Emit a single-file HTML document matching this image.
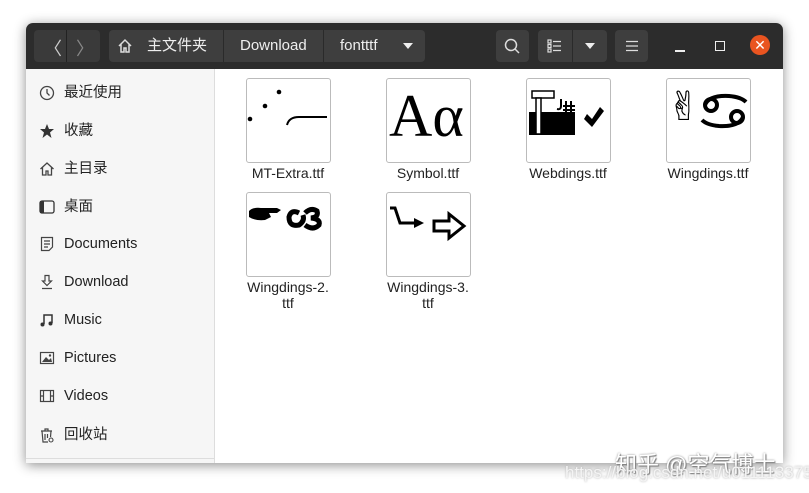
<!DOCTYPE html><html><head><meta charset="utf-8"><style>
body{margin:0;width:809px;height:493px;background:#fff;position:relative;overflow:hidden;font-family:"Liberation Sans","Noto Sans CJK SC",sans-serif}
.win{position:absolute;left:26px;top:23px;width:757px;height:440px;background:#fff;border-radius:7px 7px 0 0;box-shadow:0 2px 12px rgba(0,0,0,.45);overflow:hidden}
.hdr{position:absolute;left:0;top:0;width:757px;height:46px;background:#2c2c2c}
.b{position:absolute;top:7px;height:32px;background:#3e3e3e;border-radius:4px;color:#eee;font-size:15px;line-height:32px;text-align:center}
.side{position:absolute;left:0;top:46px;width:188px;height:394px;background:#f6f6f6;border-right:1px solid #ddd}
.it{position:absolute;left:38px;font-size:14.5px;color:#222;line-height:18px;height:18px}
.ic{position:absolute;left:13px;width:16px;height:16px}
.box{position:absolute;width:83px;height:83px;border:1px solid #bbb;border-radius:3px;background:#fff;overflow:hidden}
.lb{position:absolute;width:120px;text-align:center;font-size:14px;color:#222;line-height:16px}
</style></head><body>
<div class="win">
<div class="hdr">
<div class="b" style="left:8px;width:66px;background:#3a3a3a"></div>
<div style="position:absolute;left:40px;top:7px;width:1px;height:32px;background:#222"></div>
<div style="position:absolute;left:18px;top:12px;color:#ccc;font-size:18px">〈</div>
<div style="position:absolute;left:50px;top:12px;color:#888;font-size:18px">〉</div>
<div class="b" style="left:83px;width:316px"></div>
<div style="position:absolute;left:197px;top:7px;width:1px;height:32px;background:#2a2a2a"></div>
<div style="position:absolute;left:297px;top:7px;width:1px;height:32px;background:#2a2a2a"></div>
<svg style="position:absolute;left:91px;top:15px" width="16" height="16" viewBox="0 0 16 16"><path d="M2 8L8 2 14 8M4 6.5V14H7V10H9V14H12V6.5" fill="none" stroke="#ddd" stroke-width="1.5"/></svg>
<div style="position:absolute;left:121px;top:7px;line-height:32px;color:#eee;font-size:15px">主文件夹</div>
<div style="position:absolute;left:214px;top:7px;line-height:32px;color:#eee;font-size:15px">Download</div>
<div style="position:absolute;left:314px;top:7px;line-height:32px;color:#eee;font-size:15px">fontttf</div>
<div style="position:absolute;left:377px;top:20px;border:5px solid transparent;border-top:6px solid #eee"></div>
<div class="b" style="left:470px;width:33px"></div>
<svg style="position:absolute;left:478px;top:15px" width="17" height="17"><circle cx="7" cy="7" r="5.5" fill="none" stroke="#ddd" stroke-width="1.5"/><path d="M11 11L15 15" stroke="#ddd" stroke-width="1.5"/></svg>
<div class="b" style="left:512px;width:69px"></div>
<div style="position:absolute;left:546px;top:7px;width:1px;height:32px;background:#2a2a2a"></div>
<svg style="position:absolute;left:521px;top:16px" width="16" height="14"><g fill="none" stroke="#ddd" stroke-width="1.2"><rect x="1" y="1" width="3" height="3"/><rect x="1" y="5.5" width="3" height="3"/><rect x="1" y="10" width="3" height="3"/><path d="M6 2.5H14M6 7H14M6 11.5H14"/></g></svg>
<div style="position:absolute;left:559px;top:20px;border:5px solid transparent;border-top:6px solid #eee"></div>
<div class="b" style="left:589px;width:33px"></div>
<svg style="position:absolute;left:599px;top:16px" width="14" height="14"><path d="M1 2.5H13M1 7H13M1 11.5H13" stroke="#ddd" stroke-width="1.2"/></svg>
<div style="position:absolute;left:649px;top:27px;width:10px;height:1.5px;background:#eee"></div>
<div style="position:absolute;left:689px;top:18px;width:8px;height:8px;border:1.5px solid #eee"></div>
<div style="position:absolute;left:724px;top:12px;width:20px;height:20px;border-radius:50%;background:#e95420;color:#fff;text-align:center;line-height:20px;font-size:14px">✕</div>
</div>
<div class="side">
<svg class="ic" style="top:16px" viewBox="0 0 16 16"><circle cx="8" cy="8" r="6.5" fill="none" stroke="#444" stroke-width="1.3"/><path d="M8 4V8L10.5 10.5" fill="none" stroke="#444" stroke-width="1.3"/></svg><div class="it" style="top:15px">最近使用</div>
<svg class="ic" style="top:54px" viewBox="0 0 16 16"><path d="M8 1L10 6H15L11 9.5 12.5 15 8 11.5 3.5 15 5 9.5 1 6H6Z" fill="#333"/></svg><div class="it" style="top:53px">收藏</div>
<svg class="ic" style="top:92px" viewBox="0 0 16 16"><path d="M1.5 8L8 2 14.5 8M3.5 6.5V14H7V10H9V14H12.5V6.5" fill="none" stroke="#444" stroke-width="1.3"/></svg><div class="it" style="top:91px">主目录</div>
<svg class="ic" style="top:130px" viewBox="0 0 16 16"><rect x="1" y="2" width="14" height="12" rx="2" fill="none" stroke="#333" stroke-width="1.3"/><rect x="1" y="2" width="4" height="12" fill="#333"/></svg><div class="it" style="top:129px">桌面</div>
<svg class="ic" style="top:167px" viewBox="0 0 16 16"><path d="M2.5 1.5H13.5V11L10 14.5H2.5Z M5 5H11M5 8H11M5 11H9" fill="none" stroke="#444" stroke-width="1.2"/></svg><div class="it" style="top:166px">Documents</div>
<svg class="ic" style="top:205px" viewBox="0 0 16 16"><path d="M6 1.5H10V7H12.5L8 11.5 3.5 7H6Z M3 14.5H13" fill="none" stroke="#444" stroke-width="1.2"/></svg><div class="it" style="top:204px">Download</div>
<svg class="ic" style="top:243px" viewBox="0 0 16 16"><path d="M5 12V3H13V11" fill="none" stroke="#333" stroke-width="1.5"/><circle cx="3.5" cy="12.5" r="2" fill="#333"/><circle cx="11.5" cy="11.5" r="2" fill="#333"/></svg><div class="it" style="top:242px">Music</div>
<svg class="ic" style="top:281px" viewBox="0 0 16 16"><rect x="1.5" y="2.5" width="13" height="11" fill="none" stroke="#444" stroke-width="1.2"/><path d="M3 12L7 7 10 10 12 8 13 12Z" fill="#444"/><circle cx="11" cy="5.5" r="1.2" fill="#444"/></svg><div class="it" style="top:280px">Pictures</div>
<svg class="ic" style="top:319px" viewBox="0 0 16 16"><rect x="1.5" y="2.5" width="13" height="11" fill="none" stroke="#444" stroke-width="1.2"/><path d="M4.5 2.5V13.5M11.5 2.5V13.5M1.5 8H4.5M11.5 8H14.5" stroke="#444" stroke-width="1.2"/></svg><div class="it" style="top:318px">Videos</div>
<svg class="ic" style="top:358px" viewBox="0 0 16 16"><path d="M2 4H13M6 4V2H9V4M3 4L4 15H9M12 4L11.5 10M6 7V13M8.5 7V11" fill="none" stroke="#444" stroke-width="1.2"/><circle cx="12" cy="13" r="2" fill="none" stroke="#444" stroke-width="1.1"/></svg><div class="it" style="top:357px">回收站</div>
<div style="position:absolute;left:0;top:389px;width:188px;height:1px;background:#ddd"></div>
</div>
<div class="box" style="left:220px;top:55px"><svg width="83" height="83"><circle cx="32" cy="13" r="2.3"/><circle cx="18" cy="27" r="2.3"/><circle cx="3" cy="40" r="2.3"/><path d="M40 46Q42 38 52 38H80" fill="none" stroke="#000" stroke-width="2"/></svg></div>
<div class="lb" style="left:202px;top:142px">MT-Extra.ttf</div>
<div class="box" style="left:360px;top:55px"><div style="position:absolute;left:2px;top:2px;font-family:'Liberation Serif',serif;font-size:60px;line-height:70px">Aα</div></div>
<div class="lb" style="left:342px;top:142px">Symbol.ttf</div>
<div class="box" style="left:500px;top:55px"><svg width="83" height="83"><rect x="2" y="33" width="46" height="23"/><rect x="5" y="12" width="22" height="7" fill="none" stroke="#000" stroke-width="1.5"/><rect x="9" y="19" width="5" height="36" fill="#fff" stroke="#000" stroke-width="1.5"/><path d="M34 20V27Q34 31 30 30M36 27H48M36 31H48M39 22V38M44 22V38" fill="none" stroke="#000" stroke-width="2"/><path d="M60 35L65 40 73 28 77 32 65 48 57 40Z"/></svg></div>
<div class="lb" style="left:482px;top:142px">Webdings.ttf</div>
<div class="box" style="left:640px;top:55px"><div style="position:absolute;left:0px;top:6px;font-size:40px;line-height:44px;font-family:'DejaVu Sans',sans-serif">✌</div><svg style="position:absolute;left:32px;top:14px" width="50" height="40"><g fill="none" stroke="#000" stroke-width="4"><circle cx="12" cy="12" r="6"/><circle cx="38" cy="24" r="6"/><path d="M6 12Q10 2 30 3Q42 4 47 9M44 24Q40 34 20 33Q8 32 3 27"/></g></svg></div>
<div class="lb" style="left:622px;top:142px">Wingdings.ttf</div>
<div class="box" style="left:220px;top:169px"><svg width="83" height="83"><path d="M2 18Q6 14 14 15H30L34 17 30 20H22L24 24 18 27Q8 28 2 24Z"/><g fill="none" stroke="#000" stroke-width="5"><path d="M52 20Q44 16 42 24Q42 34 52 32Q58 28 56 22"/><path d="M58 20Q64 14 70 18Q72 24 64 25Q74 26 72 32Q66 38 58 32"/></g></svg></div>
<div class="lb" style="left:202px;top:256px">Wingdings-2.<br>ttf</div>
<div class="box" style="left:360px;top:169px"><svg width="83" height="83"><path d="M3 15L8 15 13 30H28" fill="none" stroke="#000" stroke-width="3"/><path d="M27 25L37 30 27 35Z"/><path d="M47 28H62V21L77 33 62 45V38H47Z" fill="none" stroke="#000" stroke-width="3"/></svg></div>
<div class="lb" style="left:342px;top:256px">Wingdings-3.<br>ttf</div>
</div>
<div style="position:absolute;left:615px;top:447px;font-size:22px;color:#fff;text-shadow:0 0 2px #888,1px 1px 1px #777">知乎 @空气博士</div>
<div style="position:absolute;left:565px;top:463px;font-size:17px;color:#f4f4f4;text-shadow:0 0 2px #aaa">https://blog.csdn.net/u011113375</div>
</body></html>
